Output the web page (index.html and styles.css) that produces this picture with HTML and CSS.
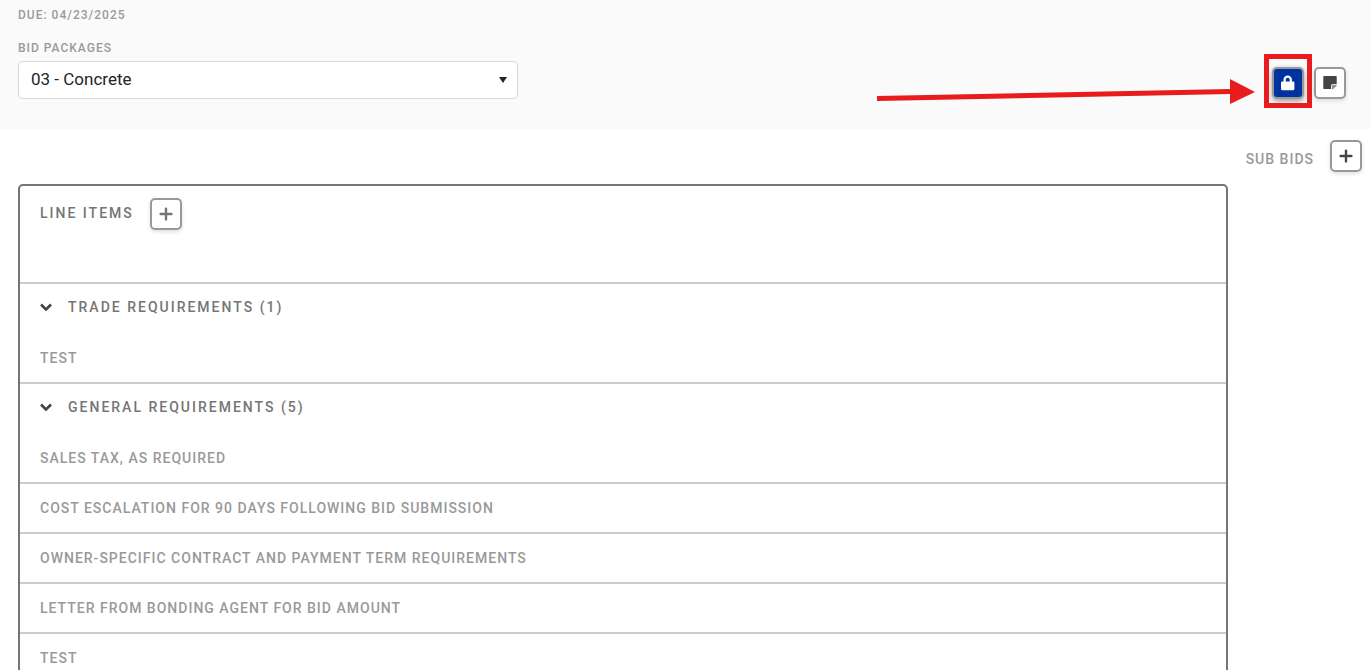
FILE: index.html
```html
<!DOCTYPE html>
<html lang="en">
<head>
    <meta charset="UTF-8">
    <meta name="viewport" content="width=device-width, initial-scale=1.0">
    <title>Bid Packages</title>
    <link rel="stylesheet" href="styles.css">
</head>
<body>
    <header class="bid-header">
        <div class="bid-package">
            <p class="due">Due: 04/23/2025</p>
            <label for="bid_package">Bid Packages</label>
            <div class="select-wrap">
                <select id="bid_package" name="bid_package">
                    <option value="03">03 - Concrete</option>
                </select>
                <svg class="caret" viewBox="0 0 8 6" aria-hidden="true"><path d="M0 0h8L4 6z"/></svg>
            </div>
        </div>
        <div class="actions">
            <div class="lock">
                <button type="button" class="icon-btn locked" aria-label="Lock">
                    <svg width="14" height="16" viewBox="0 0 14 16" aria-hidden="true">
                        <path fill="currentColor" fill-rule="evenodd" d="M2.500 6.500V4.700a4.200 4.200 0 0 1 8.400 0v1.800h1.300q1.200 0 1.200 1.200v6q0 1.600-1.600 1.600H1.600Q0 15.300 0 13.700v-6q0-1.200 1.200-1.200zm2.200 0h4V4.700a2 2 0 0 0-4 0z"/>
                    </svg>
                </button>
                <svg class="arrow" viewBox="0 0 378 26" aria-hidden="true">
                    <path d="M0 17l353-7V0l25 13-25 12V15L0 22z"/>
                </svg>
            </div>
            <button type="button" class="icon-btn" aria-label="Notes">
                <svg width="14" height="14" viewBox="0 0 14 14" aria-hidden="true">
                    <path fill="currentColor" d="M1 0h12q.7 0 .7.700V8H9.500Q8 8 8 9.500V13H1q-.7 0-.7-.7V.7Q.3 0 1 0z"/>
                    <path fill="currentColor" d="M8.800 8.800h4.900v1L10 13.200H8.800z" opacity=".6"/>
                </svg>
            </button>
        </div>
    </header>

    <div class="sub-bids">
        <span>Sub Bids</span>
        <button type="button" class="icon-btn" aria-label="Add sub bid">
            <svg width="14" height="14" viewBox="0 0 14 14" aria-hidden="true"><path class="plus" d="M7 1.600v10.800M1.600 7h10.800"/></svg>
        </button>
    </div>

    <main class="line-items">
        <div class="line-items-header">
            <h2>Line Items</h2>
            <button type="button" class="icon-btn muted" aria-label="Add line item">
                <svg width="14" height="14" viewBox="0 0 14 14" aria-hidden="true"><path class="plus" d="M7 1.600v10.800M1.600 7h10.800"/></svg>
            </button>
        </div>

        <section>
            <h3>
                <button type="button" class="group-toggle" aria-expanded="true">
                    <svg width="12" height="8" viewBox="0 0 12 8" aria-hidden="true"><path class="chevron" d="M1 1.500l5 5 5-5"/></svg>
                    Trade Requirements (1)
                </button>
            </h3>
            <ul>
                <li>Test</li>
            </ul>
        </section>

        <section>
            <h3>
                <button type="button" class="group-toggle" aria-expanded="true">
                    <svg width="12" height="8" viewBox="0 0 12 8" aria-hidden="true"><path class="chevron" d="M1 1.500l5 5 5-5"/></svg>
                    General Requirements (5)
                </button>
            </h3>
            <ul>
                <li>Sales tax, as required</li>
                <li>Cost escalation for 90 days following bid submission</li>
                <li>Owner-specific contract and payment term requirements</li>
                <li>Letter from bonding agent for bid amount</li>
                <li>Test</li>
            </ul>
        </section>
    </main>
</body>
</html>
```
FILE: styles.css
```css
* {
    box-sizing: border-box;
}

body {
    font-family: Roboto, Arial, sans-serif;
    font-size: 14px;
    font-weight: 500;
    color: #999;
    background-color: #fff;
    margin: 0;
    height: 100vh;
    overflow: hidden;
}

/* Header */
.bid-header {
    display: flex;
    justify-content: space-between;
    align-items: flex-end;
    background-color: #fafafa;
    padding: 7px 25px 30px 18px;
}

.bid-package {
    flex: 0 1 500px;
}

.due, .bid-package label {
    display: block;
    margin: 0;
    font-size: 12px;
    line-height: 16px;
    letter-spacing: 1px;
    text-transform: uppercase;
}

.due {
    margin-bottom: 17px;
}

.select-wrap {
    position: relative;
    margin-top: 5px;
}

select {
    appearance: none;
    display: block;
    width: 100%;
    height: 38px;
    padding: 0 32px 2px 12px;
    font-family: inherit;
    font-size: 17px;
    color: #212529;
    background-color: #fff;
    border: 1px solid #d9d9d9;
    border-radius: 4px;
}

.caret {
    position: absolute;
    top: 16px;
    right: 11px;
    width: 8px;
    height: 6px;
    fill: #212529;
    pointer-events: none;
}

.actions {
    display: flex;
    gap: 10px;
}

/* Buttons */
.icon-btn {
    display: flex;
    justify-content: center;
    align-items: center;
    width: 32px;
    height: 32px;
    padding: 0;
    color: #444;
    background-color: #fff;
    border: 2px solid #999;
    border-radius: 5px;
    box-shadow: 0 2px 4px rgba(0, 0, 0, 0.12);
    cursor: pointer;
}

.icon-btn.muted {
    color: #757575;
}

.icon-btn.locked {
    color: #fff;
    background-color: #0032a0;
    box-shadow: 0 2px 5px rgba(0, 0, 0, 0.4);
}

.plus {
    fill: none;
    stroke: currentColor;
    stroke-width: 2.4;
    stroke-linecap: round;
}

.chevron {
    fill: none;
    stroke: #444;
    stroke-width: 2.6;
}

/* Callout around the lock button */
.lock {
    position: relative;
}

.lock::before {
    content: "";
    position: absolute;
    top: -13px;
    right: -8px;
    bottom: -9px;
    left: -8px;
    border: 5px solid #e81c1c;
    pointer-events: none;
}

.arrow {
    position: absolute;
    top: 12px;
    right: 49px;
    width: 378px;
    height: 26px;
    fill: #e81c1c;
    pointer-events: none;
}

/* Sub bids */
.sub-bids {
    display: flex;
    justify-content: flex-end;
    align-items: center;
    gap: 16px;
    padding: 11px 9px 12px;
    letter-spacing: 1px;
    text-transform: uppercase;
}

.sub-bids span {
    padding-top: 6px;
}

/* Line items */
.line-items {
    margin: 0 143px 0 18px;
    border: 2px solid #757575;
    border-radius: 5px;
}

.line-items-header {
    display: flex;
    align-items: flex-start;
    gap: 16px;
    min-height: 98px;
    padding: 12px 20px;
    border-bottom: 2px solid #ccc;
}

h2, h3 {
    margin: 0;
    font-size: 14px;
    font-weight: 500;
    line-height: 30px;
    letter-spacing: 2px;
    text-transform: uppercase;
    color: #757575;
}

.group-toggle {
    display: flex;
    align-items: center;
    gap: 16px;
    width: 100%;
    height: 46px;
    margin-bottom: 4px;
    padding: 0 20px;
    font: inherit;
    letter-spacing: inherit;
    text-transform: inherit;
    color: inherit;
    background: none;
    border: none;
    cursor: pointer;
}

ul {
    list-style: none;
    margin: 0;
    padding: 0;
}

li {
    padding: 0 20px;
    line-height: 48px;
    letter-spacing: 1px;
    text-transform: uppercase;
    border-bottom: 2px solid #ccc;
}
```
